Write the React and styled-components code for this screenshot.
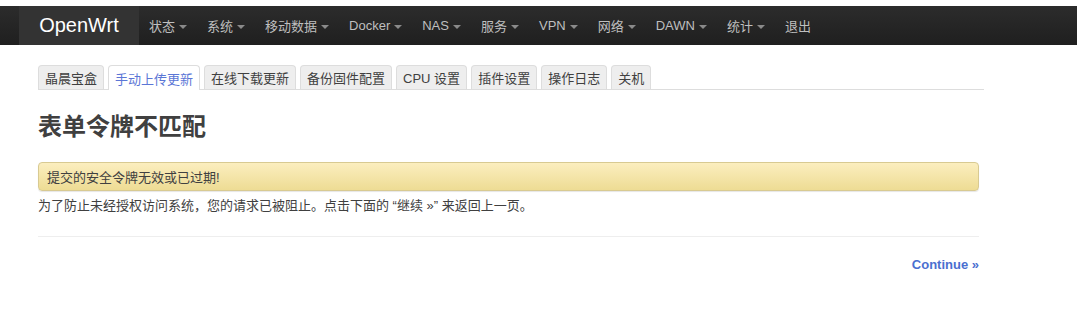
import React from 'react';
import styled, { createGlobalStyle } from 'styled-components';

const GlobalStyle = createGlobalStyle`
  body {
    margin: 0;
    padding-top: 6px;
    background: #fff;
    font-family: "Liberation Sans", Arial, "Noto Sans CJK SC", sans-serif;
    color: #404040;
  }
`;

const NavBar = styled.div`
  height: 39px;
  background: linear-gradient(to bottom, #2c2c2c, #1f1f1f);
  display: flex;
  align-items: stretch;
  padding-left: 19px;
`;

const Brand = styled.a`
  width: 120px;
  background: #333;
  color: #fff;
  font-size: 20px;
  display: flex;
  align-items: center;
  justify-content: center;
  text-decoration: none;
`;

const NavItem = styled.a`
  display: flex;
  align-items: center;
  padding: 0 10px;
  color: #bfbfbf;
  font-size: 13px;
  text-decoration: none;
`;

const Caret = styled.span`
  display: inline-block;
  margin-left: 4px;
  margin-top: 2px;
  border-left: 4px solid transparent;
  border-right: 4px solid transparent;
  border-top: 4px solid #8a8a8a;
`;

const Content = styled.div`
  width: 941px;
  margin-left: 38px;
`;

const Tabs = styled.ul`
  list-style: none;
  margin: 20px 0 0;
  padding: 0;
  display: flex;
  gap: 4px;
  width: 946px;
  border-bottom: 1px solid #ddd;
`;

const Tab = styled.li`
  padding: 0 6px;
  display: flex;
  align-items: center;
  font-size: 13px;
  border: 1px solid #ddd;
  border-bottom: none;
  border-radius: 4px 4px 0 0;
  background: ${p => (p.$active ? '#fff' : '#eee')};
  color: ${p => (p.$active ? '#5b76d6' : '#404040')};
  margin-bottom: ${p => (p.$active ? '-1px' : '0')};
  height: ${p => (p.$active ? '24px' : '23px')};
`;

const Title = styled.h2`
  margin: 22px 0 0;
  font-size: 24px;
  line-height: 30px;
  font-weight: bold;
  color: #404040;
`;

const Alert = styled.div`
  margin-top: 20px;
  height: 27px;
  padding: 0 8px;
  display: flex;
  align-items: center;
  font-size: 13px;
  color: #404040;
  background: linear-gradient(to bottom, #fbeebf, #eedc94);
  border: 1px solid #d8ca92;
  border-radius: 4px;
  box-shadow: 0 1px 1px rgba(0, 0, 0, 0.1);
`;

const Text = styled.p`
  margin: 6px 0 0;
  font-size: 13px;
  line-height: 18px;
`;

const Divider = styled.hr`
  margin: 21px 0 0;
  border: none;
  border-top: 1px solid #eee;
`;

const Actions = styled.div`
  display: flex;
  justify-content: flex-end;
  margin-top: 20px;
`;

const Continue = styled.a`
  font-size: 13px;
  font-weight: bold;
  color: #4a6fd0;
  text-decoration: none;
`;

const navItems = ['状态', '系统', '移动数据', 'Docker', 'NAS', '服务', 'VPN', '网络', 'DAWN', '统计'];
const tabs = ['晶晨宝盒', '手动上传更新', '在线下载更新', '备份固件配置', 'CPU 设置', '插件设置', '操作日志', '关机'];

export default function App() {
  return (
    <>
      <GlobalStyle />
      <NavBar>
        <Brand>OpenWrt</Brand>
        {navItems.map(n => (
          <NavItem key={n}>
            {n}
            <Caret />
          </NavItem>
        ))}
        <NavItem>退出</NavItem>
      </NavBar>
      <Content>
        <Tabs>
          {tabs.map((t, i) => (
            <Tab key={t} $active={i === 1}>{t}</Tab>
          ))}
        </Tabs>
        <Title>表单令牌不匹配</Title>
        <Alert>提交的安全令牌无效或已过期!</Alert>
        <Text>为了防止未经授权访问系统，您的请求已被阻止。点击下面的 “继续 »” 来返回上一页。</Text>
        <Divider />
        <Actions>
          <Continue>Continue »</Continue>
        </Actions>
      </Content>
    </>
  );
}
